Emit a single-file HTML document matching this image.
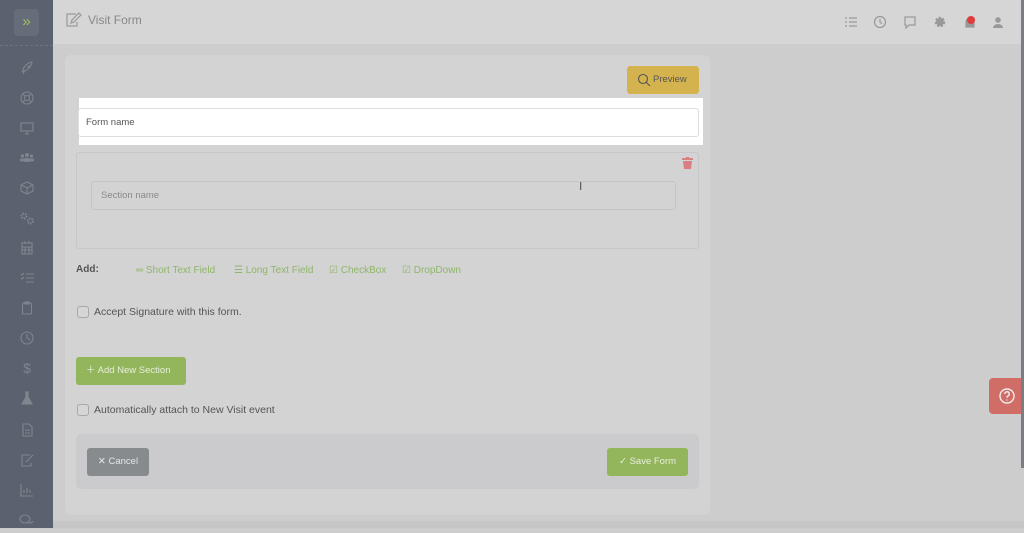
<!DOCTYPE html>
<html><head><meta charset="utf-8"><style>
*{box-sizing:border-box;margin:0;padding:0}
body{width:1024px;height:528px;overflow:hidden;background:#cdcdcd;font-family:"Liberation Sans",sans-serif;position:relative}
.a{position:absolute}
#sb{left:0;top:0;width:53px;height:528px;background:#5b616e}
.ic{position:absolute;left:19px;width:16px;height:16px}
.ic svg{width:16px;height:16px;fill:none;stroke:#80868f;stroke-width:1.1}
#hd{left:53px;top:0;width:971px;height:44px;background:#d6d6d6}
.t{font-size:11px;color:#555}
.cb{width:12px;height:12px;border:1px solid #a8a8a8;border-radius:3px;background:#d6d6d6}
.lnk{font-size:10px;color:#8fb66a}
</style></head><body>
<div id="sb" class="a">
 <div class="a" style="left:14px;top:9px;width:25px;height:27px;background:#666c78;border-radius:4px;color:#9cc25a;font-size:15px;text-align:center;line-height:26px">»</div>
 <div class="a" style="left:0;top:45px;width:53px;border-top:1px dashed #6c7280"></div>
 <div class="ic" style="top:60px"><svg viewBox="0 0 16 16"><path d="M4 12c-1-3 3-9 9-10-1 6-7 10-10 9zM6 10l-2 4M10 6a1 1 0 1 0 .1 0"/></svg></div>
 <div class="ic" style="top:90px"><svg viewBox="0 0 16 16"><circle cx="8" cy="8" r="6"/><circle cx="8" cy="8" r="2.5"/><path d="M4 4l2 2M12 4l-2 2M4 12l2-2M12 12l-2-2"/></svg></div>
 <div class="ic" style="top:120px"><svg viewBox="0 0 16 16"><rect x="2" y="3" width="12" height="8"/><path d="M6 14h4M8 11v3"/></svg></div>
 <div class="ic" style="top:150px"><svg viewBox="0 0 16 16" style="fill:#80868f;stroke:none"><circle cx="8" cy="5" r="2"/><circle cx="3.5" cy="6" r="1.6"/><circle cx="12.5" cy="6" r="1.6"/><rect x="5" y="8" width="6" height="4" rx="1.5"/><rect x="1" y="8.5" width="4" height="3" rx="1.2"/><rect x="11" y="8.5" width="4" height="3" rx="1.2"/></svg></div>
 <div class="ic" style="top:180px"><svg viewBox="0 0 16 16"><path d="M8 2l6 3v6l-6 3-6-3V5zM2 5l6 3 6-3M8 8v6"/></svg></div>
 <div class="ic" style="top:210px"><svg viewBox="0 0 16 16"><circle cx="5" cy="6" r="2.5" stroke-width="2" stroke-dasharray="1.5 1"/><circle cx="11.5" cy="11" r="2.5" stroke-width="2" stroke-dasharray="1.5 1"/></svg></div>
 <div class="ic" style="top:240px"><svg viewBox="0 0 16 16"><rect x="3" y="3" width="10" height="11"/><path d="M3 7h10M3 10h10M6 7v7M10 7v7M6 1v3M10 1v3"/></svg></div>
 <div class="ic" style="top:270px"><svg viewBox="0 0 16 16"><path d="M7 4h8M7 8h8M7 12h8M2 4l1 1 2-2M2 8l1 1 2-2"/></svg></div>
 <div class="ic" style="top:300px"><svg viewBox="0 0 16 16"><rect x="3.5" y="3" width="9" height="11" rx="1"/><rect x="6" y="2" width="4" height="2"/></svg></div>
 <div class="ic" style="top:330px"><svg viewBox="0 0 16 16"><circle cx="8" cy="8" r="6"/><path d="M8 4v4l3 2"/></svg></div>
 <div class="ic" style="top:360px;color:#80868f;font-size:14px;text-align:center">$</div>
 <div class="ic" style="top:390px"><svg viewBox="0 0 16 16"><path d="M6 2h4M7 2v5l-4 7h10l-4-7V2" style="fill:#80868f"/></svg></div>
 <div class="ic" style="top:422px"><svg viewBox="0 0 16 16"><path d="M4 2h6l3 3v9H4zM6 8h5M6 11h5"/></svg></div>
 <div class="ic" style="top:452px"><svg viewBox="0 0 16 16"><path d="M11 3H3v11h9v-3M7 10l7-7"/></svg></div>
 <div class="ic" style="top:482px"><svg viewBox="0 0 16 16"><path d="M2 2v12h12M5 11V8M8 11V6M11 11V8"/></svg></div>
 <div class="ic" style="top:512px"><svg viewBox="0 0 16 16"><ellipse cx="6" cy="7" rx="5" ry="4"/><path d="M9 11a4 3 0 0 0 5-2"/></svg></div>
</div>
<div id="hd" class="a">
 <svg class="a" style="left:12px;top:12px;width:17px;height:16px" viewBox="0 0 17 16" fill="none" stroke="#999" stroke-width="1.2"><path d="M11 2H2v12h10v-4M6 11l1-3 7-7 2 2-7 7z"/></svg>
 <div class="a" style="left:35px;top:13px;font-size:12px;color:#888">Visit Form</div>
 <svg class="a" style="left:791px;top:15px;width:250px;height:16px" viewBox="0 0 250 16" fill="none" stroke="#999" stroke-width="1.2">
  <path d="M5 3h8M5 7h8M5 11h8M1 3h2M1 7h2M1 11h2"/>
  <circle cx="36" cy="7" r="5.5"/><path d="M36 4v3l2 2"/>
  <path d="M61 2h10v8h-6l-3 3v-3h-1z"/>
  <circle cx="96" cy="7" r="4" fill="#999" stroke-width="2.5" stroke-dasharray="2 1.5"/>
  <path d="M122 12V7a4 4 0 0 1 8 0v5z" fill="#999"/>
  <circle cx="154" cy="5" r="2.8" fill="#999" stroke="none"/><path d="M149 13a5 4 0 0 1 10 0z" fill="#999" stroke="none"/>
 </svg>
 <div class="a" style="left:914px;top:16px;width:8px;height:8px;border-radius:50%;background:#e03a3a"></div>
</div>
<div class="a" style="left:65px;top:55px;width:645px;height:460px;background:#d3d3d3;border-radius:6px"></div>
<div class="a" style="left:627px;top:66px;width:72px;height:28px;background:#d4b24e;border-radius:3px;font-size:9.5px;color:#555;line-height:28px;padding-left:26px">Preview</div>
<svg class="a" style="left:637px;top:73px;width:14px;height:14px" viewBox="0 0 14 14" fill="none" stroke="#555" stroke-width="1.1"><circle cx="6" cy="6" r="4.5"/><path d="M9.5 9.5l3.5 3.5"/></svg>
<div class="a" style="left:79px;top:98px;width:624px;height:47px;background:#fff"></div>
<div class="a" style="left:78px;top:108px;width:621px;height:29px;border:1px solid #ddd;border-radius:3px;background:#fff;font-size:9.5px;color:#555;line-height:28px;padding-left:7px">Form name</div>
<div class="a" style="left:76px;top:152px;width:623px;height:97px;border:1px solid #c7c7c7;border-radius:3px"></div>
<svg class="a" style="left:682px;top:157px;width:11px;height:12px" viewBox="0 0 11 12" fill="#d77f82"><rect x="0" y="1" width="11" height="2"/><rect x="4" y="0" width="3" height="1.5"/><path d="M1 4h9l-1 8H2z"/></svg>
<div class="a" style="left:579px;top:179px;font-size:12px;color:#555">I</div>
<div class="a" style="left:91px;top:181px;width:585px;height:29px;border:1px solid #c5c5c5;border-radius:3px;font-size:9.5px;color:#8a8a8a;line-height:28px;padding-left:9px">Section name</div>
<div class="a" style="left:76px;top:264px;font-size:10px;font-weight:bold;color:#555">Add:</div>
<div class="a lnk" style="left:136px;top:265px">═ Short Text Field</div>
<div class="a lnk" style="left:234px;top:265px">☰ Long Text Field</div>
<div class="a lnk" style="left:329px;top:265px">☑ CheckBox</div>
<div class="a lnk" style="left:402px;top:265px">☑ DropDown</div>
<div class="a cb" style="left:77px;top:306px"></div>
<div class="a t" style="left:94px;top:306px;font-size:10.5px">Accept Signature with this form.</div>
<div class="a" style="left:76px;top:357px;width:110px;height:28px;background:#93b65c;border-radius:3px;color:#e8eedd;font-size:9.5px;line-height:27px;padding-left:10px">＋ Add New Section</div>
<div class="a cb" style="left:77px;top:404px"></div>
<div class="a t" style="left:94px;top:404px;font-size:10.5px">Automatically attach to New Visit event</div>
<div class="a" style="left:76px;top:434px;width:623px;height:55px;background:#cbcbcd;border-radius:5px"></div>
<div class="a" style="left:87px;top:448px;width:62px;height:28px;background:#878b8e;border-radius:3px;color:#e6e6e6;font-size:9.5px;line-height:28px;text-align:center">✕ Cancel</div>
<div class="a" style="left:607px;top:448px;width:81px;height:28px;background:#93b65c;border-radius:3px;color:#e8eedd;font-size:9.5px;line-height:28px;text-align:center">✓ Save Form</div>
<div class="a" style="left:989px;top:378px;width:35px;height:36px;background:#cf6d66;border-radius:4px 0 0 4px"></div>
<svg class="a" style="left:998px;top:387px;width:18px;height:18px" viewBox="0 0 18 18" fill="none" stroke="#eee" stroke-width="1.4"><circle cx="9" cy="9" r="7"/><path d="M6.8 7a2.2 2.2 0 1 1 3 2c-.8.4-.8 1-.8 1.8M9 12.5v1"/></svg>
<div class="a" style="left:1021px;top:0;width:3px;height:468px;background:#7a7d84"></div>
<div class="a" style="left:53px;top:521px;width:971px;height:7px;background:#c6c6c6"></div>
</body></html>
